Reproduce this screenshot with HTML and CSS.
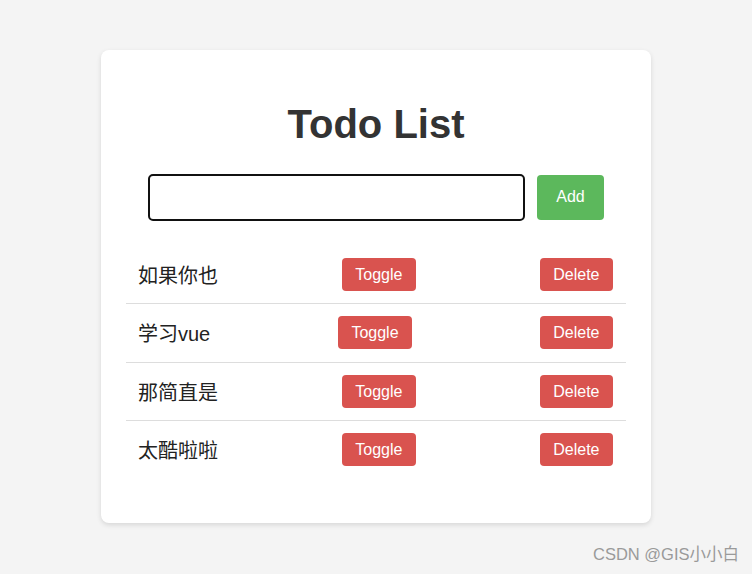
FILE: index.html
```html
<!DOCTYPE html>
<html lang="zh">
<head>
<meta charset="utf-8">
<title>Todo List</title>
<link rel="stylesheet" href="styles.css">
</head>
<body>
<div class="card">
  <h1 class="title">Todo List</h1>
  <div class="add-row">
    <input class="add-input" type="text">
    <button class="btn btn-add">Add</button>
  </div>
  <ul class="todo-list">
    <li class="todo-item"><span class="todo-text">如果你也</span><button class="btn btn-red">Toggle</button><button class="btn btn-red">Delete</button></li>
    <li class="todo-item"><span class="todo-text">学习vue</span><button class="btn btn-red">Toggle</button><button class="btn btn-red">Delete</button></li>
    <li class="todo-item"><span class="todo-text">那简直是</span><button class="btn btn-red">Toggle</button><button class="btn btn-red">Delete</button></li>
    <li class="todo-item"><span class="todo-text">太酷啦啦</span><button class="btn btn-red">Toggle</button><button class="btn btn-red">Delete</button></li>
  </ul>
</div>
<div class="watermark">CSDN @GIS小小白</div>
</body>
</html>
```
FILE: styles.css
```css
html, body {
  margin: 0;
  padding: 0;
}
body {
  background: #f4f4f4;
  font-family: "Liberation Sans", Arial, "Noto Sans CJK SC", sans-serif;
  padding-top: 50px;
  min-height: 574px;
  box-sizing: border-box;
  position: relative;
}
.card {
  width: 550px;
  box-sizing: border-box;
  margin: 0 auto;
  background: #fff;
  border-radius: 8px;
  padding: 25px 25px 25px;
  box-shadow: 0 2px 5px rgba(0, 0, 0, 0.12);
}
.title {
  font-size: 40px;
  font-weight: bold;
  color: #333;
  text-align: center;
  margin: 26px 0 27px;
  line-height: 46px;
}
.add-row {
  display: flex;
  justify-content: center;
  align-items: center;
  gap: 12px;
}
.add-input {
  width: 377px;
  height: 47px;
  box-sizing: border-box;
  border: 2px solid #111;
  border-radius: 5px;
  outline: none;
  padding: 0 10px;
  font-size: 16px;
}
.btn {
  border: none;
  color: #fff;
  font-family: "Liberation Sans", Arial, sans-serif;
  font-size: 16px;
  border-radius: 4px;
  cursor: pointer;
}
.btn-add {
  background: #5cb85c;
  width: 67px;
  height: 45px;
  padding: 0 0 2px;
}
.btn-red {
  background: #d9534f;
  padding: 0 13.5px;
  height: 33px;
  line-height: 31px;
}
.todo-list {
  list-style: none;
  margin: 24.5px 0 19.5px;
  padding: 0;
}
.todo-item {
  display: flex;
  justify-content: space-between;
  align-items: center;
  padding: 12.25px 13px 12.25px 12px;
  border-bottom: 1px solid #ddd;
}
.todo-item:last-child {
  border-bottom: none;
}
.todo-text {
  font-size: 20px;
  color: #222;
  font-family: "Liberation Sans", Arial, "Noto Sans CJK SC", sans-serif;
}
.watermark {
  position: absolute;
  right: 13px;
  bottom: 9px;
  color: #9a9a9a;
  font-size: 16.5px;
  font-family: "Liberation Sans", Arial, "Noto Sans CJK SC", sans-serif;
}
```
